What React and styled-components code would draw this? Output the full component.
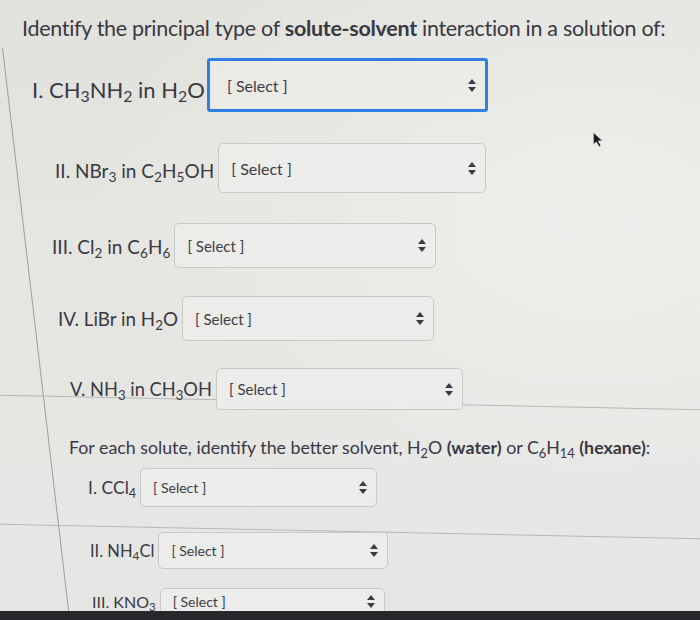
import styled, { createGlobalStyle } from "styled-components";

const GlobalStyle = createGlobalStyle`
  html, body {
    margin: 0;
    padding: 0;
  }
  body {
    width: 700px;
    height: 620px;
    overflow: hidden;
    font-family: Lato, "Open Sans", sans-serif;
    color: #3a3843;
    background: #e4e4e1;
  }
`;

const Screen = styled.div`
  position: relative;
  width: 700px;
  height: 620px;
  display: flex;
  flex-direction: column;
  overflow: hidden;
  background:
    radial-gradient(ellipse at 85% 35%, rgba(240, 240, 238, 0.8), rgba(240, 240, 238, 0) 60%),
    linear-gradient(180deg, #e2e2dd 0%, #e5e5e1 40%, #e6e6e5 100%);
`;

const Content = styled.div`
  flex: 1;
  overflow: hidden;
  padding-top: 12px;
`;

const Band = styled.div`
  height: 9px;
  background: #26282c;
`;

const Title = styled.h1`
  margin: 0;
  padding-left: 22px;
  font-size: 21.5px;
  line-height: 32px;
  font-weight: 400;
  letter-spacing: -0.3px;
  white-space: nowrap;
`;

const Body = styled.div`
  position: relative;
  padding-top: 14px;

  &::before {
    content: "";
    position: absolute;
    left: 2px;
    top: 4px;
    height: 600px;
    width: 1px;
    background: #9c9c9a;
    transform-origin: top left;
    transform: skewX(6.7deg);
  }
`;

const Row = styled.div`
  display: flex;
  align-items: center;
  gap: ${(p) => p.$gap || 4}px;
  padding-left: ${(p) => p.$indent}px;
  margin-top: ${(p) => p.$top || 0}px;
  position: relative;
  z-index: 1;
`;

const Label = styled.span`
  font-size: ${(p) => p.$size}px;
  white-space: nowrap;
  padding-top: ${(p) => p.$drop || 0}px;

  sub {
    font-size: 0.72em;
    vertical-align: -0.28em;
    line-height: 0;
  }
`;

const Select = styled.div`
  box-sizing: border-box;
  width: ${(p) => p.$width}px;
  height: ${(p) => p.$height}px;
  display: flex;
  align-items: center;
  justify-content: space-between;
  padding: 0 9px 0 ${(p) => (p.$focused ? 17 : 12)}px;
  border: ${(p) => (p.$focused ? "3px solid #2f7fe6" : "1px solid #c8c8c5")};
  border-radius: ${(p) => (p.$focused ? 3 : 5)}px;
  background: ${(p) => (p.$focused ? "rgba(238, 238, 232, 0.6)" : "rgba(236, 236, 234, 0.9)")};
  font-size: ${(p) => p.$size || 15}px;
  color: #3e3c46;
`;

const Divider = styled.div`
  height: 1px;
  background: #b7b7b4;
  margin-top: ${(p) => p.$top}px;
  transform: rotate(1.2deg);
  position: relative;
  z-index: 0;
`;

const Prompt = styled.p`
  margin: ${(p) => p.$top}px 0 0;
  padding-left: 69px;
  font-size: 17.8px;
  line-height: 24px;
  white-space: nowrap;

  b {
    font-weight: 700;
  }

  sub {
    font-size: 0.72em;
    vertical-align: -0.28em;
    line-height: 0;
  }
`;

const Pointer = styled.svg`
  position: absolute;
  left: 592px;
  top: 131px;
  z-index: 2;
`;

const Arrows = () => (
  <svg width="8" height="13" viewBox="0 0 8 13">
    <path d="M4 0 L8 5 L0 5 Z M4 13 L8 8 L0 8 Z" fill="#3b3945" />
  </svg>
);

const Dropdown = ({ width, height, focused, size }) => (
  <Select $width={width} $height={height} $focused={focused} $size={size}>
    <span>[ Select ]</span>
    <Arrows />
  </Select>
);

const App = () => (
  <Screen>
    <GlobalStyle />
    <Content>
      <Title>
        Identify the principal type of <b>solute-solvent</b> interaction in a solution of:
      </Title>
      <Body>
        <Row $indent={32} $gap={2}>
          <Label $size={22} $drop={8}>
            I. CH<sub>3</sub>NH<sub>2</sub> in H<sub>2</sub>O
          </Label>
          <Dropdown width={281} height={54} focused size={16} />
        </Row>
        <Row $indent={55} $top={31}>
          <Label $size={19} $drop={4}>
            II. NBr<sub>3</sub> in C<sub>2</sub>H<sub>5</sub>OH
          </Label>
          <Dropdown width={268} height={50} size={16} />
        </Row>
        <Row $indent={52} $top={30}>
          <Label $size={19} $drop={2}>
            III. Cl<sub>2</sub> in C<sub>6</sub>H<sub>6</sub>
          </Label>
          <Dropdown width={262} height={45} />
        </Row>
        <Row $indent={58} $top={28}>
          <Label $size={18.8}>
            IV. LiBr in H<sub>2</sub>O
          </Label>
          <Dropdown width={252} height={45} />
        </Row>
        <Row $indent={70} $top={27}>
          <Label $size={18.3}>
            V. NH<sub>3</sub> in CH<sub>3</sub>OH
          </Label>
          <Dropdown width={247} height={42} />
        </Row>
        <Divider $top={-8} />
        <Prompt $top={32}>
          For each solute, identify the better solvent, H<sub>2</sub>O <b>(water)</b> or C
          <sub>6</sub>H<sub>14</sub> <b>(hexane)</b>:
        </Prompt>
        <Row $indent={88} $top={9}>
          <Label $size={17.5}>
            I. CCl<sub>4</sub>
          </Label>
          <Dropdown width={237} height={39} size={14} />
        </Row>
        <Divider $top={24} />
        <Row $indent={90} $top={0}>
          <Label $size={16.5}>
            II. NH<sub>4</sub>Cl
          </Label>
          <Dropdown width={230} height={37} size={14} />
        </Row>
        <Row $indent={92} $top={19}>
          <Label $size={16}>
            III. KNO<sub>3</sub>
          </Label>
          <Dropdown width={225} height={26} size={14} />
        </Row>
      </Body>
    </Content>
    <Band />
    <Pointer width="13" height="17" viewBox="0 0 12 16">
      <path
        d="M1 1 L1 13 L4 10.5 L6.5 15 L8.5 14 L6 9.5 L10 9.5 Z"
        fill="#1c1c22"
        stroke="#f4f4f4"
        strokeWidth="0.8"
      />
    </Pointer>
  </Screen>
);

export default App;
